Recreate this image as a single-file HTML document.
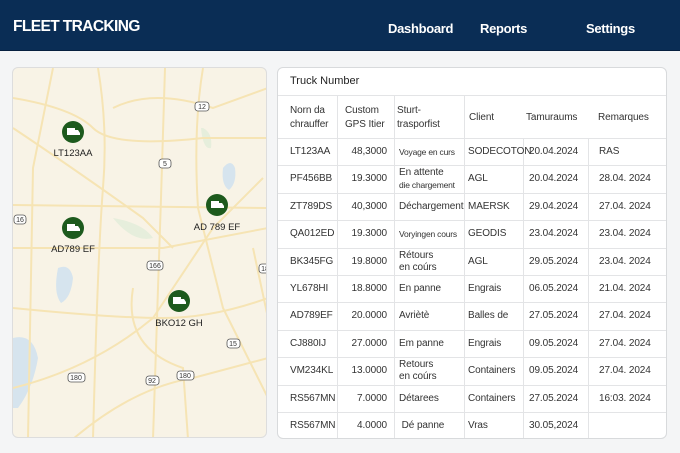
<!DOCTYPE html>
<html><head><meta charset="utf-8"><style>
*{margin:0;padding:0;box-sizing:border-box}
body{width:680px;height:453px;background:#f4f5f6;font-family:"Liberation Sans",sans-serif;position:relative;overflow:hidden}
.hdr{position:absolute;left:0;top:0;width:680px;height:51px;background:#0a2d55;border-bottom:1px solid #06203f}
.hdr .t{position:absolute;left:13px;top:18px;color:#fff;font-weight:bold;font-size:15.5px;letter-spacing:-0.6px}
.hdr .n{position:absolute;top:21px;color:#fff;font-size:13px;font-weight:bold;letter-spacing:-0.3px}
.map{position:absolute;left:12px;top:67px;width:255px;height:371px;border:1px solid #ddd;border-radius:6px;overflow:hidden;background:#f8f3e6}
.tbl{position:absolute;left:277px;top:67px;width:390px;height:372px;border:1px solid #d8dadc;border-radius:6px;background:#fff;overflow:hidden}
.tbl .ti{position:absolute;left:12px;top:7px;font-size:11px;color:#222}
.tbl .hl{position:absolute;left:0;width:390px;height:1px;background:#e3e4e6}
.tbl .vl{position:absolute;width:1px;background:#e3e4e6}
.c{position:absolute;font-size:10px;color:#333;line-height:12px;white-space:nowrap;letter-spacing:-0.1px}
.s{font-size:8.5px;letter-spacing:-0.2px}
</style></head><body>
<div class="hdr"><div class="t">FLEET TRACKING</div>
<div class="n" style="left:388px">Dashboard</div><div class="n" style="left:480px">Reports</div><div class="n" style="left:586px">Settings</div></div>
<div class="map">
<svg width="255" height="371" viewBox="0 0 255 371" font-family="Liberation Sans" >
<g fill="#d6e4ee"><path d="M210 100q8-10 12 0q2 15-6 22q-8-5-6-22z"/><path d="M45 200q12-5 15 10q-2 20-12 25q-8-10-3-35z"/><path d="M0 270q20-5 25 20q-5 30-20 50l-5 0z"/></g>
<g fill="#e6eedc"><path d="M190 60q10 5 8 20q-8 2-10-20z"/><path d="M100 150q30 5 40 20q-20 5-40-20z"/></g>
<g fill="none" stroke="#f6e4b4" stroke-width="2">
<path d="M0 30 Q60 40 80 60 T190 70 L255 70"/><path d="M85 0 Q95 60 90 120 T80 371"/><path d="M152 0 L148 130 L140 371"/>
<path d="M0 137 L255 140"/><path d="M0 180 L150 180 L255 160"/><path d="M0 240 Q100 250 150 250 T255 230"/>
<path d="M190 0 Q180 60 185 140 L210 240 L255 330"/><path d="M0 60 Q60 100 130 150 L160 180"/>
<path d="M40 0 L20 100 L15 371"/><path d="M0 320 Q80 300 140 250 L200 160 L250 110"/>
<path d="M60 371 Q120 320 180 310 L255 290"/><path d="M120 220 Q110 280 170 300 L175 371"/>
<path d="M100 40 Q140 20 200 40 L255 20"/><path d="M240 180 L255 250"/>
</g>
<g font-size="7" text-anchor="middle" fill="#333">
<rect x="182" y="34" width="14" height="9" rx="3" fill="#fff" stroke="#555" stroke-width=".8"/><text x="189" y="41">12</text>
<rect x="146" y="91" width="12" height="9" rx="3" fill="#fff" stroke="#555" stroke-width=".8"/><text x="152" y="98">5</text>
<rect x="1" y="147" width="12" height="9" rx="3" fill="#fff" stroke="#555" stroke-width=".8"/><text x="7" y="154">16</text>
<rect x="134" y="193" width="16" height="9" rx="3" fill="#fff" stroke="#555" stroke-width=".8"/><text x="142" y="200">166</text>
<rect x="246" y="196" width="14" height="9" rx="3" fill="#fff" stroke="#555" stroke-width=".8"/><text x="252" y="203">18</text>
<rect x="214" y="271" width="13" height="9" rx="3" fill="#fff" stroke="#555" stroke-width=".8"/><text x="220" y="278">15</text>
<rect x="55" y="305" width="17" height="9" rx="3" fill="#fff" stroke="#555" stroke-width=".8"/><text x="63" y="312">180</text>
<rect x="133" y="308" width="13" height="9" rx="3" fill="#fff" stroke="#555" stroke-width=".8"/><text x="139" y="315">92</text>
<rect x="164" y="303" width="17" height="9" rx="3" fill="#fff" stroke="#555" stroke-width=".8"/><text x="172" y="310">180</text>
</g>
<g font-size="9.5" text-anchor="middle" fill="#222">
<g transform="translate(60,64)"><circle r="11" fill="#1d5a1d"/><rect x="-6" y="-4" width="8" height="7" fill="#fff"/><path d="M2-2h3l2 3v2h-5z" fill="#fff"/></g><text x="60" y="88">LT123AA</text>
<g transform="translate(60,160)"><circle r="11" fill="#1d5a1d"/><rect x="-6" y="-4" width="8" height="7" fill="#fff"/><path d="M2-2h3l2 3v2h-5z" fill="#fff"/></g><text x="60" y="184">AD789 EF</text>
<g transform="translate(204,137)"><circle r="11" fill="#1d5a1d"/><rect x="-6" y="-4" width="8" height="7" fill="#fff"/><path d="M2-2h3l2 3v2h-5z" fill="#fff"/></g><text x="204" y="162">AD 789 EF</text>
<g transform="translate(166,233)"><circle r="11" fill="#1d5a1d"/><rect x="-6" y="-4" width="8" height="7" fill="#fff"/><path d="M2-2h3l2 3v2h-5z" fill="#fff"/></g><text x="166" y="258">BKO12 GH</text>
</g></svg></div>
<div class="tbl">
<div class="ti">Truck Number</div>
<div class="hl" style="top:27px"></div>
<div class="vl" style="left:59px;top:28px;height:344px"></div>
<div class="vl" style="left:116px;top:28px;height:344px"></div>
<div class="vl" style="left:186px;top:28px;height:344px"></div>
<div class="vl" style="left:245px;top:70px;height:302px"></div>
<div class="vl" style="left:310px;top:70px;height:302px"></div>
<div class="c" style="left:12px;top:36px;line-height:14px">Norn da<br>chrauffer</div>
<div class="c" style="left:67px;top:36px;line-height:14px">Custom<br>GPS Itier</div>
<div class="c" style="left:119px;top:36px;line-height:14px">Sturt-<br>trasporfist</div>
<div class="c" style="left:191px;top:44px">Client</div>
<div class="c" style="left:248px;top:44px">Tamuraums</div>
<div class="c" style="left:320px;top:44px">Remarques</div>
<div id="rows"></div>
</div>
<script>
var d=[["LT123AA","48,3000","<span class=s>Voyage en curs</span>","SODECOTON","20.04.2024","RAS"],
["PF456BB","19.3000","En attente<br><span class=s>die chargement</span>","AGL","20.04.2024","28.04. 2024"],
["ZT789DS","40,3000","Déchargement","MAERSK","29.04.2024","27.04. 2024"],
["QA012ED","19.3000","<span class=s>Voryingen cours</span>","GEODIS","23.04.2024","23.04. 2024"],
["BK345FG","19.8000","Rétours<br>en coúrs","AGL","29.05.2024","23.04. 2024"],
["YL678HI","18.8000","En panne","Engrais","06.05.2024","21.04. 2024"],
["AD789EF","20.0000","Avriètè","Balles de","27.05.2024","27.04. 2024"],
["CJ880IJ","27.0000","Em panne","Engrais","09.05.2024","27.04. 2024"],
["VM234KL","13.0000","Retours<br>en coúrs","Containers","09.05.2024","27.04. 2024"],
["RS567MN","7.0000","Détarees","Containers","27.05.2024","16:03. 2024"],
["RS567MN","4.0000","&nbsp;Dé panne","Vras","30.05,2024",""]];
var h="";for(var i=0;i<d.length;i++){var t=70+i*27.4,r=d[i];
h+='<div class="hl" style="top:'+t+'px"></div>';
var two=r[2].indexOf("<br>")>=0;
h+='<div class="c" style="left:12px;top:'+(t+8)+'px">'+r[0]+'</div>';
h+='<div class="c" style="right:279px;top:'+(t+8)+'px">'+r[1]+'</div>';
h+='<div class="c" style="left:121px;top:'+(t+(two?2:8))+'px">'+r[2]+'</div>';
h+='<div class="c" style="left:190px;top:'+(t+8)+'px">'+r[3]+'</div>';
h+='<div class="c" style="left:251px;top:'+(t+8)+'px">'+r[4]+'</div>';
h+='<div class="c" style="left:321px;top:'+(t+8)+'px">'+r[5]+'</div>';}
document.getElementById("rows").innerHTML=h;
</script>
</body></html>
